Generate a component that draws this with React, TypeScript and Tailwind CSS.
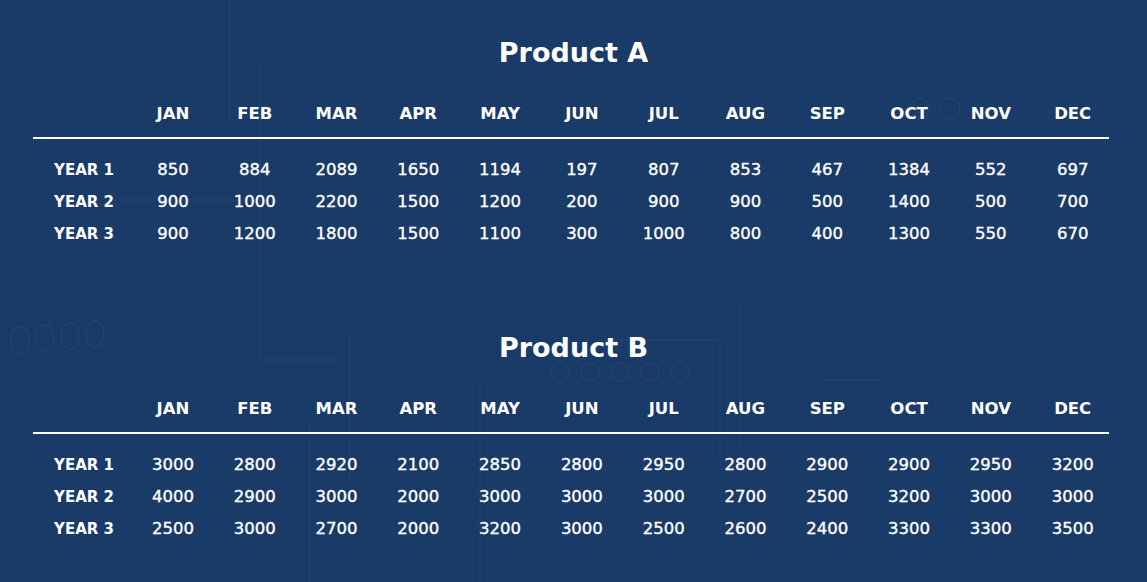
const months = ["JAN", "FEB", "MAR", "APR", "MAY", "JUN", "JUL", "AUG", "SEP", "OCT", "NOV", "DEC"];

const products = [
  {
    name: "Product A",
    rows: [
      [850, 884, 2089, 1650, 1194, 197, 807, 853, 467, 1384, 552, 697],
      [900, 1000, 2200, 1500, 1200, 200, 900, 900, 500, 1400, 500, 700],
      [900, 1200, 1800, 1500, 1100, 300, 1000, 800, 400, 1300, 550, 670],
    ],
  },
  {
    name: "Product B",
    rows: [
      [3000, 2800, 2920, 2100, 2850, 2800, 2950, 2800, 2900, 2900, 2950, 3200],
      [4000, 2900, 3000, 2000, 3000, 3000, 3000, 2700, 2500, 3200, 3000, 3000],
      [2500, 3000, 2700, 2000, 3200, 3000, 2500, 2600, 2400, 3300, 3300, 3500],
    ],
  },
];

const cols = "grid grid-cols-[99px_repeat(12,81.8px)]";

function ProductTable({ name, rows }: { name: string; rows: number[][] }) {
  return (
    <section className="flex flex-col items-center">
      <h2 className="text-[27px] leading-[36px] font-bold text-white">{name}</h2>
      <div className="mt-[27px] w-[1081px]">
        <div className={cols + " h-[32px] items-center"}>
          <div />
          {months.map((m) => (
            <div key={m} className="text-center text-[16.5px] font-bold text-white">
              {m}
            </div>
          ))}
        </div>
        <div className="mt-[7px] h-[2px] w-[1076px] bg-white" />
        <div className="mt-[15px]">
          {rows.map((row, i) => (
            <div key={i} className={cols + " h-[32px] items-center"}>
              <div className="pr-[18px] text-right text-[15px] font-bold text-white">
                YEAR {i + 1}
              </div>
              {row.map((v, j) => (
                <div
                  key={j}
                  className="text-center text-[16.5px] text-white [-webkit-text-stroke:0.35px_white]"
                >
                  {v}
                </div>
              ))}
            </div>
          ))}
        </div>
      </div>
    </section>
  );
}

export default function App() {
  return (
    <div
      className="relative h-[582px] w-full overflow-hidden bg-[#1a3a68]"
      style={{ fontFamily: '"DejaVu Sans", "Liberation Sans", sans-serif' }}
    >
      {/* faint circuit texture */}
      <svg className="pointer-events-none absolute inset-0 h-full w-full opacity-[0.035]" viewBox="0 0 1147 582">
        <g stroke="#ffffff" strokeWidth="1.5" fill="none">
          <path d="M230 0v120M260 60v300h80M350 330v150M120 200h160M480 380v202M600 340h120v120M740 300v150M820 380h60M310 420v162" />
          <circle cx="560" cy="372" r="9" />
          <circle cx="590" cy="372" r="9" />
          <circle cx="620" cy="372" r="9" />
          <circle cx="650" cy="372" r="9" />
          <circle cx="680" cy="372" r="9" />
          <circle cx="920" cy="108" r="10" />
          <circle cx="950" cy="108" r="10" />
          <ellipse cx="20" cy="340" rx="9" ry="13" />
          <ellipse cx="45" cy="338" rx="9" ry="13" />
          <ellipse cx="70" cy="336" rx="9" ry="13" />
          <ellipse cx="95" cy="334" rx="9" ry="13" />
        </g>
      </svg>
      <div className="relative flex flex-col gap-[80px] pt-[35px]">
        {products.map((p) => (
          <ProductTable key={p.name} name={p.name} rows={p.rows} />
        ))}
      </div>
    </div>
  );
}
